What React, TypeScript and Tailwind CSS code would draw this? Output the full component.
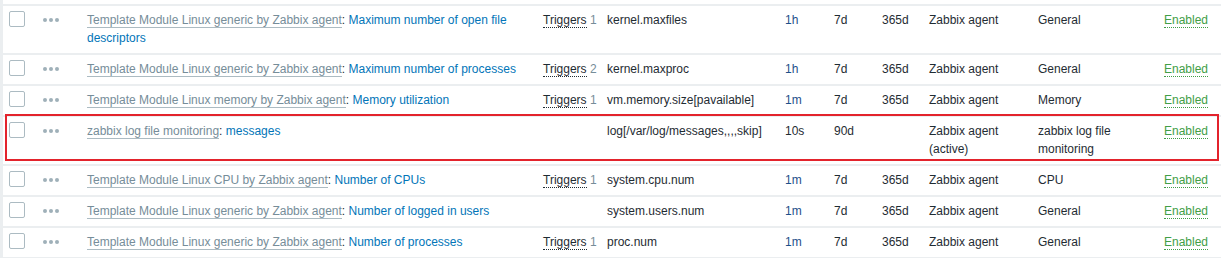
import React from "react";

type Row = {
  host: string;
  name: string;
  triggers?: number;
  key: string;
  interval: string;
  history: string;
  trends: string;
  type: string;
  app: string;
  highlight?: boolean;
};

const ROWS: Row[] = [
  { host: "Template Module Linux generic by Zabbix agent", name: "Maximum number of open file descriptors", triggers: 1, key: "kernel.maxfiles", interval: "1h", history: "7d", trends: "365d", type: "Zabbix agent", app: "General" },
  { host: "Template Module Linux generic by Zabbix agent", name: "Maximum number of processes", triggers: 2, key: "kernel.maxproc", interval: "1h", history: "7d", trends: "365d", type: "Zabbix agent", app: "General" },
  { host: "Template Module Linux memory by Zabbix agent", name: "Memory utilization", triggers: 1, key: "vm.memory.size[pavailable]", interval: "1m", history: "7d", trends: "365d", type: "Zabbix agent", app: "Memory" },
  { host: "zabbix log file monitoring", name: "messages", key: "log[/var/log/messages,,,,skip]", interval: "10s", history: "90d", trends: "", type: "Zabbix agent (active)", app: "zabbix log file monitoring", highlight: true },
  { host: "Template Module Linux CPU by Zabbix agent", name: "Number of CPUs", triggers: 1, key: "system.cpu.num", interval: "1m", history: "7d", trends: "365d", type: "Zabbix agent", app: "CPU" },
  { host: "Template Module Linux generic by Zabbix agent", name: "Number of logged in users", key: "system.users.num", interval: "1m", history: "7d", trends: "365d", type: "Zabbix agent", app: "General" },
  { host: "Template Module Linux generic by Zabbix agent", name: "Number of processes", triggers: 1, key: "proc.num", interval: "1m", history: "7d", trends: "365d", type: "Zabbix agent", app: "General" },
];

const cols =
  "grid grid-cols-[35px_44px_456px_64px_178px_49px_48px_47px_109px_126px_1fr]";

function ItemRow({ row }: { row: Row }) {
  return (
    <div className={`relative ${cols} border-b-2 border-[#ebeef0] pt-[5px] pb-[6px] leading-[18px]`}>
      <div className="pl-[6px]">
        <div className="w-4 h-4 rounded-[2px] border border-[#acbbc2] bg-white" />
      </div>
      <div className="pl-[5px] flex items-start">
        <div className="flex gap-[2px] h-[18px] items-center">
          <span className="w-[4px] h-[4px] rounded-full bg-[#9fb0b9]" />
          <span className="w-[4px] h-[4px] rounded-full bg-[#9fb0b9]" />
          <span className="w-[4px] h-[4px] rounded-full bg-[#9fb0b9]" />
        </div>
      </div>
      <div className="pl-[5px] pr-[5px]">
        <span className="text-[#768d99] border-b border-[#acbbc2]">{row.host}</span>
        <span className="text-[#1f2c33]">: </span>
        <span className="text-[#0275b8]">{row.name}</span>
      </div>
      <div className="pl-[5px] whitespace-nowrap">
        {row.triggers !== undefined && (
          <>
            <span className="text-[#1f2c33] border-b border-dotted border-[#1f2c33]">Triggers</span>
            <span className="text-[#768d99]"> {row.triggers}</span>
          </>
        )}
      </div>
      <div className="pl-[5px] text-[#1f2c33]">{row.key}</div>
      <div className={`pl-[5px] ${row.highlight ? "text-[#1f2c33]" : "text-[#1d4f8a]"}`}>{row.interval}</div>
      <div className="pl-[5px] text-[#1f2c33]">{row.history}</div>
      <div className="pl-[5px] text-[#1f2c33]">{row.trends}</div>
      <div className="pl-[5px] pr-[5px] text-[#1f2c33]">{row.type}</div>
      <div className="pl-[5px] pr-[5px] text-[#1f2c33]">{row.app}</div>
      <div className="pl-[5px]">
        <span className="text-[#429e47] border-b border-dotted border-[#429e47]">Enabled</span>
      </div>
      {row.highlight && (
        <div className="absolute top-[-3px] left-[2px] right-[2px] h-[47px] border-2 border-[#e3232c] pointer-events-none" />
      )}
    </div>
  );
}

export default function App() {
  return (
    <div
      className="w-[1221px] h-[258px] bg-white overflow-hidden text-[12px]"
      style={{ fontFamily: '"Liberation Sans", Arial, sans-serif' }}
    >
      <div className="pt-[4px] border-l-[3px] border-[#ebeef0] h-full">
        <div className="border-t-2 border-[#ebeef0]">
          {ROWS.map((row, i) => (
            <ItemRow key={i} row={row} />
          ))}
        </div>
      </div>
    </div>
  );
}
